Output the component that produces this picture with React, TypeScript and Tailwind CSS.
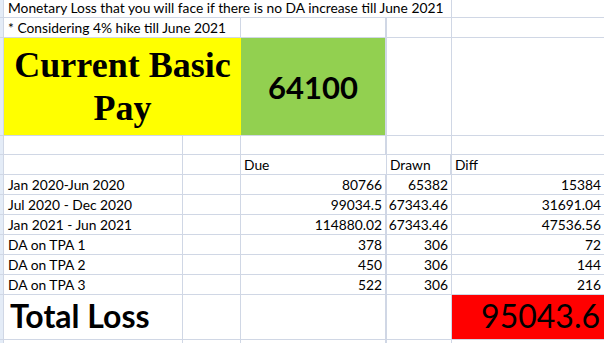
import React from "react";

const line = "border-[#d0d7e5]";

type Row = { label: string; due: string; drawn: string; diff: string };

const rows: Row[] = [
  { label: "Jan 2020-Jun 2020", due: "80766", drawn: "65382", diff: "15384" },
  { label: "Jul 2020 - Dec 2020", due: "99034.5", drawn: "67343.46", diff: "31691.04" },
  { label: "Jan 2021 - Jun 2021", due: "114880.02", drawn: "67343.46", diff: "47536.56" },
  { label: "DA on TPA 1", due: "378", drawn: "306", diff: "72" },
  { label: "DA on TPA 2", due: "450", drawn: "306", diff: "144" },
  { label: "DA on TPA 3", due: "522", drawn: "306", diff: "216" },
];

const Strip = () => <div className={`bg-[#e4ecf7] border-r border-b ${line}`} />;

const App: React.FC = () => {
  const cell = `border-r border-b ${line} flex items-end overflow-visible whitespace-nowrap leading-[16px] pb-[1px]`;
  const freeze = `border-r-2 border-b ${line} flex items-end whitespace-nowrap leading-[16px] pb-[1px]`;

  return (
    <div
      className="w-[604px] h-[343px] overflow-hidden bg-white text-[13.8px] text-black"
      style={{ fontFamily: "Lato, 'Open Sans', sans-serif" }}
    >
      <div className="grid grid-cols-[4px_179px_58px_146px_65px_153px] grid-rows-[19px_20px_98px_19px_20px_20px_20px_20px_20px_20px_20px_45px_20px] -mt-[1px]">
        {/* row 1 */}
        <Strip />
        <div className={`col-span-4 ${cell} pl-[4px]`}>
          Monetary Loss that you will face if there is no DA increase till June 2021
        </div>
        <div className={cell} />

        {/* row 2 */}
        <Strip />
        <div className={`col-span-2 ${cell} pl-[4px]`}>* Considering 4% hike till June 2021</div>
        <div className={freeze} />
        <div className={cell} />
        <div className={cell} />

        {/* basic pay */}
        <Strip />
        <div
          className={`col-span-2 bg-[#ffff00] border-b ${line} flex items-center justify-center text-center font-bold text-[36px] leading-[43px]`}
          style={{ fontFamily: "'Liberation Serif', 'DejaVu Serif', serif" }}
        >
          <div>
            Current Basic
            <br />
            Pay
          </div>
        </div>
        <div className={`bg-[#92d050] border-r-2 border-b ${line} flex items-center justify-center font-bold text-[31px] pt-[2px]`}>
          64100
        </div>
        <div className={cell} />
        <div className={cell} />

        {/* empty row */}
        <Strip />
        <div className={cell} />
        <div className={cell} />
        <div className={freeze} />
        <div className={cell} />
        <div className={cell} />

        {/* headers */}
        <Strip />
        <div className={cell} />
        <div className={cell} />
        <div className={`${cell} pl-[3px]`}>Due</div>
        <div className={`${freeze} pl-[3px]`}>Drawn</div>
        <div className={`${cell} pl-[3px]`}>Diff</div>

        {rows.map((r) => (
          <React.Fragment key={r.label}>
            <Strip />
            <div className={`${cell} pl-[4px]`}>{r.label}</div>
            <div className={cell} />
            <div className={`${freeze} justify-end pr-[3px]`}>{r.due}</div>
            <div className={`${cell} justify-end pr-[3px]`}>{r.drawn}</div>
            <div className={`${cell} justify-end pr-[3px]`}>{r.diff}</div>
          </React.Fragment>
        ))}

        {/* total */}
        <Strip />
        <div className={`${cell} pl-[6px] pb-[5px] font-bold text-[32px] leading-[36px]`}>Total Loss</div>
        <div className={cell} />
        <div className={freeze} />
        <div className={cell} />
        <div className={`bg-[#ff0000] border-b ${line} flex items-end justify-end pr-[5px] pb-[5px] text-[32px] leading-[36px]`}>
          95043.6
        </div>

        {/* partial row */}
        <Strip />
        <div className={cell} />
        <div className={cell} />
        <div className={freeze} />
        <div className={cell} />
        <div className={cell} />
      </div>
    </div>
  );
};

export default App;
